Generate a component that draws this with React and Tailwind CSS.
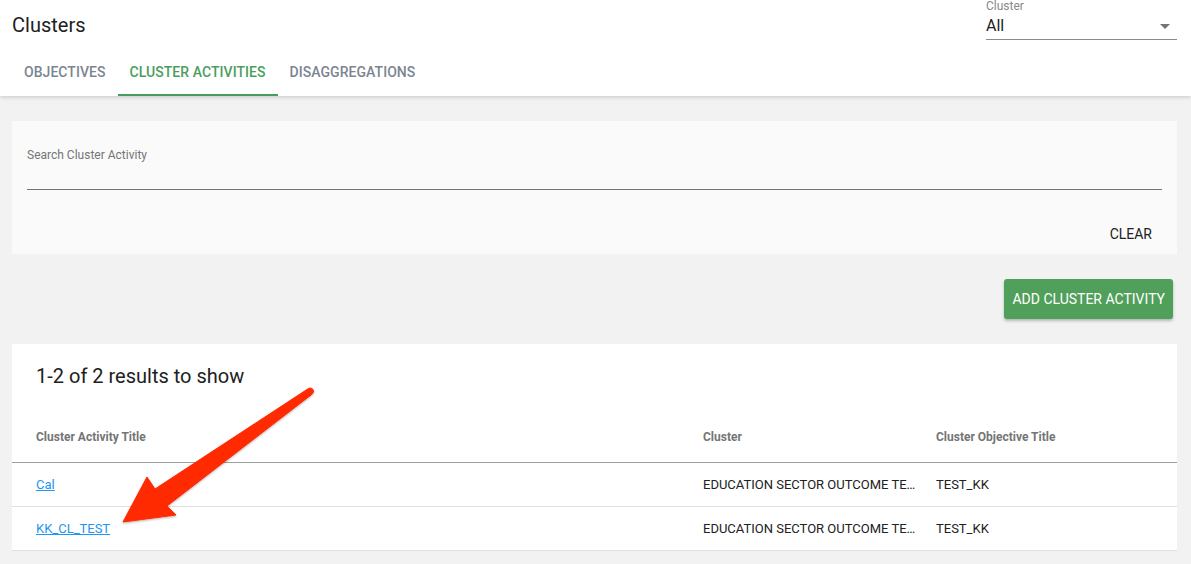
import React from "react";

export default function App() {
  const rows = [
    { title: "Cal", cluster: "EDUCATION SECTOR OUTCOME TE…", obj: "TEST_KK" },
    { title: "KK_CL_TEST", cluster: "EDUCATION SECTOR OUTCOME TE…", obj: "TEST_KK" },
  ];
  return (
    <div className="relative min-h-[564px] bg-[#f2f2f2] font-['Roboto',sans-serif] text-[#212121]">
      <header className="relative z-10 bg-white shadow-[0_1px_4px_rgba(0,0,0,0.18)]">
        <div className="flex h-[48px] items-start justify-between pl-3 pr-[14px]">
          <h1 className="pt-[12px] text-[20px] leading-[26px] font-normal text-[#212121]">Clusters</h1>
          <div className="w-[191px]">
            <div className="text-[12px] leading-[12px] text-[#8a8a8a]">Cluster</div>
            <div className="flex h-[28px] items-center justify-between border-b border-[#8a8a8a] pt-[1px]">
              <span className="text-[16px] leading-[20px] text-[#212121]">All</span>
              <svg width="10" height="5" viewBox="0 0 10 5" className="mr-[7px]">
                <path d="M0 0 L10 0 L5 5 Z" fill="#757575" />
              </svg>
            </div>
          </div>
        </div>
        <nav className="flex h-[48px] pl-3">
          <div className="flex h-full items-center px-3 text-[14px] font-medium tracking-[0.05px] text-[#7b8591]">OBJECTIVES</div>
          <div className="flex h-full items-center border-b-2 border-[#4a9e5c] px-3 pt-[2px] text-[14px] font-medium tracking-[0.05px] text-[#4a9e5c]">CLUSTER ACTIVITIES</div>
          <div className="flex h-full items-center px-3 text-[14px] font-medium tracking-[0.05px] text-[#7b8591]">DISAGGREGATIONS</div>
        </nav>
      </header>

      <main className="pl-3 pr-[14px] pt-[25px]">
        <section className="bg-[#fafafa] px-[15px] pt-[27px] pb-[6px]">
          <div className="text-[12px] leading-[14px] text-[#757575]">Search Cluster Activity</div>
          <div className="mt-[27px] h-[1px] bg-[#757575]"></div>
          <div className="mt-[30px] flex justify-end">
            <button className="px-[10px] py-[4px] text-[14px] leading-[20px] text-[#212121]">CLEAR</button>
          </div>
        </section>

        <div className="flex justify-end pt-[25px] pr-[4px]">
          <button className="h-[40px] rounded-[3px] bg-[#509f5a] px-[8px] text-[14px] text-white shadow-[0_2px_3px_rgba(0,0,0,0.25)]">ADD CLUSTER ACTIVITY</button>
        </div>

        <section className="mt-[25px] bg-white">
          <div className="px-6 pt-[20px] pb-[23px] text-[20px] leading-[24px] text-[#212121]">1-2 of 2 results to show</div>
          <div className="flex h-[52px] items-center border-b border-[#9e9e9e] text-[12px] font-bold text-[#757575]">
            <div className="w-[691px] shrink-0 pl-6">Cluster Activity Title</div>
            <div className="w-[233px] shrink-0">Cluster</div>
            <div className="flex-1">Cluster Objective Title</div>
          </div>
          {rows.map((r) => (
            <div key={r.title} className="flex h-[44px] items-center border-b border-[#e0e0e0] text-[13px] text-[#212121]">
              <div className="w-[691px] shrink-0 pl-6">
                <a href="#" className="text-[#2196f3] underline">{r.title}</a>
              </div>
              <div className="w-[233px] shrink-0 whitespace-nowrap pr-[18px]">{r.cluster}</div>
              <div className="flex-1">{r.obj}</div>
            </div>
          ))}
        </section>
      </main>

      <svg className="pointer-events-none absolute left-0 top-0 z-20" width="1191" height="564" viewBox="0 0 1191 564">
        <defs>
          <filter id="sh" x="-10%" y="-10%" width="120%" height="120%">
            <feDropShadow dx="0" dy="1" stdDeviation="1.2" floodColor="#000" floodOpacity="0.3" />
          </filter>
        </defs>
        <path
          d="M123 522 L147 477 L155 489 L308.5 388.5 Q312.5 387 313.5 391 Q313.5 393.5 311 395 L167 506 L176 515 Z"
          fill="#ff2a00"
          stroke="#ff2a00"
          strokeWidth="1"
          strokeLinejoin="round"
          filter="url(#sh)"
        />
      </svg>
    </div>
  );
}
